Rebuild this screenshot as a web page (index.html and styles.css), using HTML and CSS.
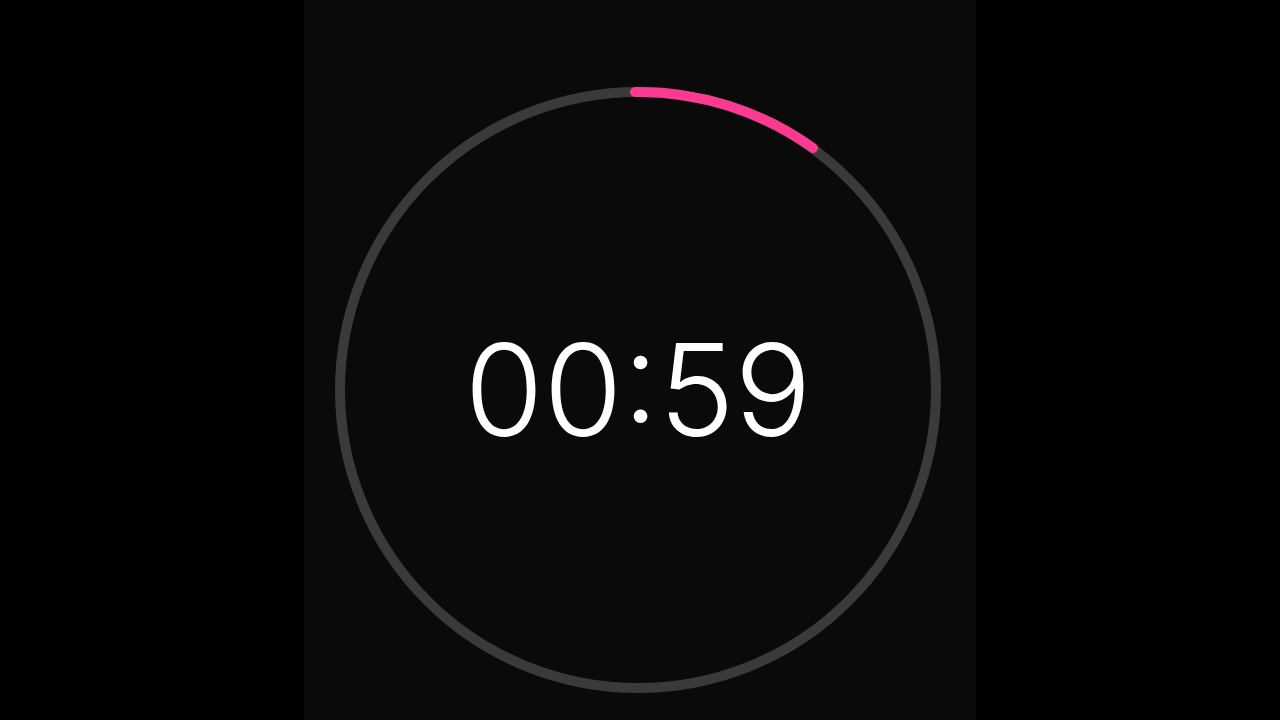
FILE: index.html
```html
<!DOCTYPE html>
<html lang="en">
<head>
<meta charset="utf-8">
<title>Timer</title>
<link rel="stylesheet" href="styles.css">
</head>
<body>
<div class="stage">
  <main class="panel">
    <svg class="ring" viewBox="0 0 672 720" width="672" height="720" aria-hidden="true">
      <circle class="track" cx="334" cy="390" r="298"/>
      <path class="progress" d="M 331 92 A 298 298 0 0 1 509 148"/>
    </svg>
    <div class="time">00:59</div>
  </main>
</div>
</body>
</html>
```
FILE: styles.css
```css
html, body {
  margin: 0;
  padding: 0;
  background: #000;
}
.stage {
  width: 1280px;
  height: 720px;
  display: flex;
  justify-content: center;
  background: #000;
}
.panel {
  width: 672px;
  height: 720px;
  background: #0a0a0a;
  display: grid;
}
.ring {
  grid-area: 1 / 1;
  display: block;
}
.track {
  fill: none;
  stroke: #3a3a3c;
  stroke-width: 10;
}
.progress {
  fill: none;
  stroke: #fd3a92;
  stroke-width: 10;
  stroke-linecap: round;
}
.time {
  grid-area: 1 / 1;
  align-self: start;
  justify-self: center;
  margin-top: 320px;
  margin-left: -4px;
  font-family: "Inter", "Liberation Sans", sans-serif;
  font-weight: 300;
  font-size: 128px;
  line-height: 140px;
  color: #fff;
  letter-spacing: 0;
}
```
